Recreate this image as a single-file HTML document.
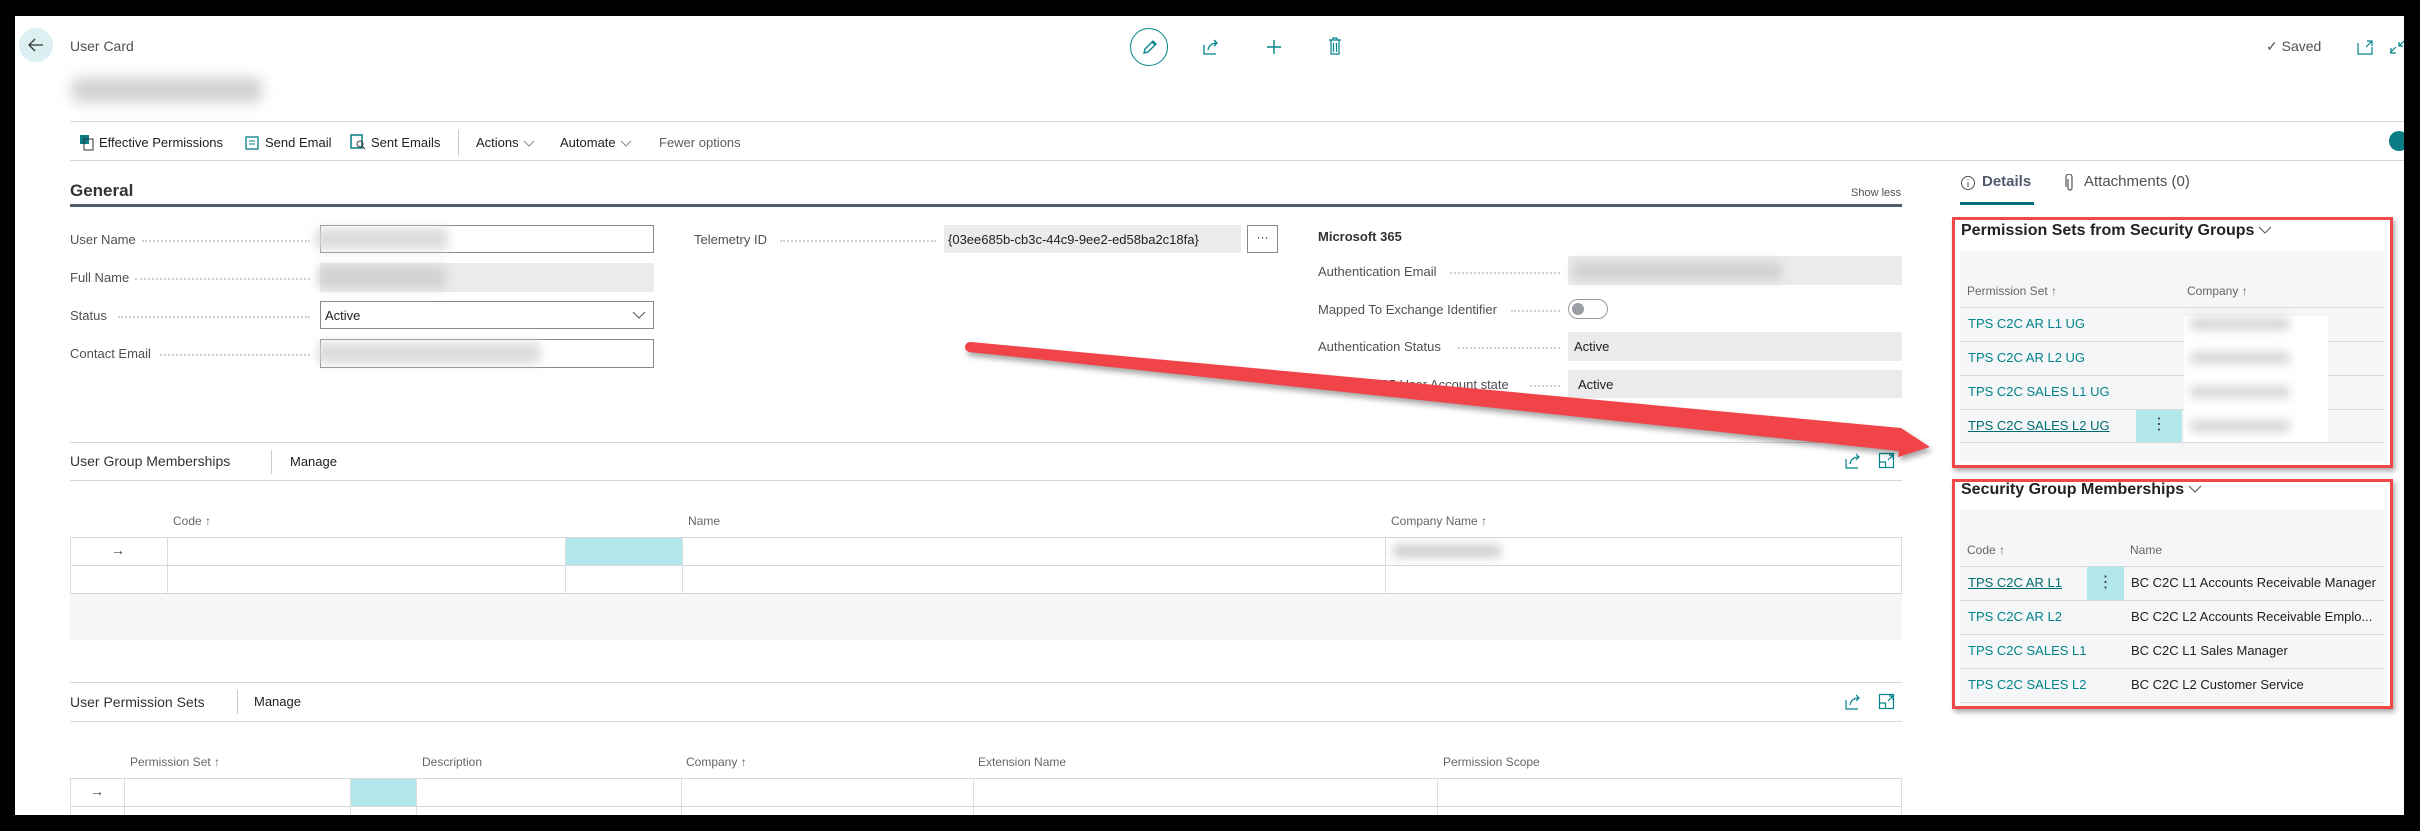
<!DOCTYPE html>
<html><head><meta charset="utf-8"><style>
*{margin:0;padding:0;box-sizing:border-box}
body{width:2420px;height:831px;background:#000;position:relative;overflow:hidden;font-family:"Liberation Sans",sans-serif;color:#212121}
.a{position:absolute;white-space:nowrap}
#page{position:absolute;left:15px;top:16px;width:2389px;height:799px;background:#fff;overflow:hidden}
.lbl{position:absolute;font-size:13px;color:#505050;line-height:16px}
.dot{position:absolute;border-bottom:2px dotted #d0d0d0;height:2px}
.hl{position:absolute;height:1px;background:#d8d8d8}
.vl{position:absolute;width:1px;background:#dcdcdc}
.grey{position:absolute;background:#eaebec}
.blur{position:absolute;background:#d4d5d7;filter:blur(5px);border-radius:4px}
.th{position:absolute;font-size:12px;color:#666}
.lnk{position:absolute;font-size:13px;color:#00838a}
.red{position:absolute;border:3px solid #f04848;box-shadow:2px 3px 5px rgba(0,0,0,.35)}
.chev{display:inline-block;vertical-align:middle;margin-left:4px}
</style></head><body>
<div id="page"></div>
<!-- header -->
<div class="a" style="left:19px;top:28px;width:34px;height:34px;border-radius:50%;background:#dcf0f2"></div>
<svg class="a" style="left:26px;top:36px" width="20" height="18"><path d="M17 9H3M9 3L3 9l6 6" stroke="#333" stroke-width="1.3" fill="none"/></svg>
<div class="a" style="left:70px;top:38px;font-size:14px;color:#505050">User Card</div>
<div class="blur" style="left:72px;top:78px;width:190px;height:24px;background:#cfd0d2;filter:blur(7px)"></div>

<div class="a" style="left:1130px;top:28px;width:38px;height:38px;border-radius:50%;border:1.5px solid #00838a"></div>
<svg class="a" style="left:1140px;top:37px" width="20" height="20"><path d="M4 16l1-4L13 4l3 3-8 8zM12 5l3 3" stroke="#00838a" stroke-width="1.3" fill="none"/></svg>
<svg class="a" style="left:1201px;top:37px" width="20" height="20"><path d="M3 8v9h12M7 13c1-5 4-7 9-7M13 3l3 3-3 3" stroke="#00838a" stroke-width="1.3" fill="none"/></svg>
<svg class="a" style="left:1264px;top:37px" width="20" height="20"><path d="M10 3v14M3 10h14" stroke="#00838a" stroke-width="1.4"/></svg>
<svg class="a" style="left:1325px;top:35px" width="20" height="22"><path d="M4 5h12M8 5V3h4v2M6 5v14h8V5M8.5 8v9M11.5 8v9" stroke="#00838a" stroke-width="1.2" fill="none"/></svg>

<div class="a" style="left:2266px;top:38px;font-size:14px;color:#505050">✓ Saved</div>
<svg class="a" style="left:2356px;top:38px" width="20" height="18"><path d="M2 5v11h14V9M11 3h5v5M16 3l-6 6" stroke="#00838a" stroke-width="1.2" fill="none"/></svg>
<svg class="a" style="left:2389px;top:38px" width="16" height="18"><path d="M1 15l6-6M2 10v5h5M15 3l-5 5M10 4v4h4" stroke="#00838a" stroke-width="1.2" fill="none"/></svg>

<div class="hl" style="left:70px;top:121px;width:2334px;background:#d6d6d6"></div>
<!-- toolbar -->
<svg class="a" style="left:79px;top:134px" width="16" height="18"><rect x="1" y="1" width="9" height="9" fill="#0a7c84"/><rect x="5" y="5" width="9" height="11" fill="none" stroke="#333" stroke-width="1"/></svg>
<div class="a" style="left:99px;top:135px;font-size:13px">Effective Permissions</div>
<svg class="a" style="left:245px;top:136px" width="14" height="14"><rect x="1" y="1" width="12" height="12" fill="none" stroke="#0a7c84" stroke-width="1.3"/><path d="M4 5h6M4 8h6" stroke="#0a7c84"/></svg>
<div class="a" style="left:265px;top:135px;font-size:13px">Send Email</div>
<svg class="a" style="left:350px;top:134px" width="16" height="17"><rect x="1" y="1" width="11" height="13" fill="none" stroke="#0a7c84" stroke-width="1.5"/><circle cx="10" cy="10" r="3" fill="none" stroke="#333"/><path d="M12 12l3 3" stroke="#333"/></svg>
<div class="a" style="left:371px;top:135px;font-size:13px">Sent Emails</div>
<div class="vl" style="left:458px;top:130px;height:26px;background:#ccc"></div>
<div class="a" style="left:476px;top:135px;font-size:13px">Actions<svg class="chev" width="12" height="8"><path d="M1 1l5 5 5-5" stroke="#888" fill="none"/></svg></div>
<div class="a" style="left:560px;top:135px;font-size:13px">Automate<svg class="chev" width="12" height="8"><path d="M1 1l5 5 5-5" stroke="#888" fill="none"/></svg></div>
<div class="a" style="left:659px;top:135px;font-size:13px;color:#606060">Fewer options</div>
<div class="a" style="left:2389px;top:131px;width:20px;height:20px;border-radius:50%;background:#0a7c84"></div>
<div class="hl" style="left:70px;top:160px;width:2334px;background:#d6d6d6"></div>

<!-- General -->
<div class="a" style="left:70px;top:181px;font-size:17px;font-weight:bold;color:#333">General</div>
<div class="a" style="left:1851px;top:187px;font-size:11px;color:#505050">Show less</div>
<div class="a" style="left:70px;top:204px;width:1832px;height:3px;background:#505c6d"></div>

<div class="lbl" style="left:70px;top:232px">User Name</div><div class="dot" style="left:142px;top:240px;width:168px"></div>
<div class="a" style="left:320px;top:225px;width:334px;height:28px;border:1px solid #8a8a8a"></div>
<div class="blur" style="left:316px;top:228px;width:132px;height:22px;background:#dcdcdc"></div>
<div class="lbl" style="left:70px;top:270px">Full Name</div><div class="dot" style="left:135px;top:278px;width:175px"></div>
<div class="grey" style="left:320px;top:263px;width:334px;height:29px"></div>
<div class="blur" style="left:318px;top:266px;width:128px;height:22px;background:#d2d2d4"></div>
<div class="lbl" style="left:70px;top:308px">Status</div><div class="dot" style="left:118px;top:316px;width:192px"></div>
<div class="a" style="left:320px;top:301px;width:334px;height:28px;border:1px solid #8a8a8a;font-size:13px;padding:6px 4px">Active</div>
<svg class="a" style="left:632px;top:310px" width="14" height="10"><path d="M1 2l6 6 6-6" stroke="#555" fill="none"/></svg>
<div class="lbl" style="left:70px;top:346px">Contact Email</div><div class="dot" style="left:160px;top:354px;width:150px"></div>
<div class="a" style="left:320px;top:339px;width:334px;height:29px;border:1px solid #8a8a8a"></div>
<div class="blur" style="left:318px;top:342px;width:222px;height:22px;background:#dcdcdc"></div>

<div class="lbl" style="left:694px;top:232px">Telemetry ID</div><div class="dot" style="left:780px;top:240px;width:156px"></div>
<div class="grey" style="left:944px;top:225px;width:297px;height:28px;font-size:13px;padding:7px 4px">{03ee685b-cb3c-44c9-9ee2-ed58ba2c18fa}</div>
<div class="a" style="left:1247px;top:225px;width:31px;height:28px;border:1px solid #8a8a8a;font-size:12px;text-align:center;line-height:22px">···</div>

<div class="a" style="left:1318px;top:229px;font-size:13px;font-weight:bold;color:#333">Microsoft 365</div>
<div class="lbl" style="left:1318px;top:264px">Authentication Email</div><div class="dot" style="left:1450px;top:272px;width:110px"></div>
<div class="grey" style="left:1568px;top:256px;width:334px;height:29px"></div>
<div class="blur" style="left:1572px;top:262px;width:210px;height:18px;background:#d2d2d4"></div>
<div class="lbl" style="left:1318px;top:302px">Mapped To Exchange Identifier</div><div class="dot" style="left:1511px;top:310px;width:49px"></div>
<div class="a" style="left:1568px;top:299px;width:40px;height:20px;border:1px solid #999;border-radius:10px"></div>
<div class="a" style="left:1572px;top:303px;width:12px;height:12px;border-radius:50%;background:#9a9da3"></div>
<div class="lbl" style="left:1318px;top:339px">Authentication Status</div><div class="dot" style="left:1458px;top:347px;width:102px"></div>
<div class="grey" style="left:1568px;top:332px;width:334px;height:29px;font-size:13px;padding:7px 6px">Active</div>
<div class="lbl" style="left:1318px;top:377px">Microsoft 365 User Account state</div><div class="dot" style="left:1530px;top:385px;width:30px"></div>
<div class="grey" style="left:1568px;top:370px;width:334px;height:28px;font-size:13px;padding:7px 10px">Active</div>

<!-- User Group Memberships -->
<div class="hl" style="left:70px;top:442px;width:1832px"></div>
<div class="a" style="left:70px;top:453px;font-size:14px;color:#333">User Group Memberships</div>
<div class="vl" style="left:271px;top:450px;height:24px;background:#ccc"></div>
<div class="a" style="left:290px;top:454px;font-size:13px">Manage</div>
<svg class="a" style="left:1844px;top:452px" width="18" height="18"><path d="M2 7v9h12M6 12c1-5 4-7 9-7M12 2l3 3-3 3" stroke="#00838a" stroke-width="1.2" fill="none"/></svg>
<svg class="a" style="left:1878px;top:452px" width="18" height="18"><rect x="1.5" y="1.5" width="14" height="14" fill="none" stroke="#00838a" stroke-width="1.2"/><path d="M1.5 10h6v6M10 8l5-5M11 3h4v4" stroke="#00838a" stroke-width="1.2" fill="none"/></svg>
<div class="hl" style="left:70px;top:480px;width:1832px"></div>
<div class="th" style="left:173px;top:514px">Code ↑</div>
<div class="th" style="left:688px;top:514px">Name</div>
<div class="th" style="left:1391px;top:514px">Company Name ↑</div>
<div class="a" style="left:565px;top:537px;width:117px;height:28px;background:#b2e8eb"></div>
<div class="hl" style="left:70px;top:537px;width:1832px"></div>
<div class="hl" style="left:70px;top:565px;width:1832px"></div>
<div class="hl" style="left:70px;top:593px;width:1832px"></div>
<div class="vl" style="left:70px;top:537px;height:56px"></div>
<div class="vl" style="left:167px;top:537px;height:56px"></div>
<div class="vl" style="left:565px;top:537px;height:56px"></div>
<div class="vl" style="left:682px;top:537px;height:56px"></div>
<div class="vl" style="left:1385px;top:537px;height:56px"></div>
<div class="vl" style="left:1901px;top:537px;height:56px"></div>
<div class="a" style="left:111px;top:542px;font-size:14px;color:#444">→</div>
<div class="blur" style="left:1393px;top:544px;width:108px;height:14px;background:#d0d0d2"></div>
<div class="a" style="left:70px;top:594px;width:1832px;height:46px;background:#f5f6f7"></div>

<!-- User Permission Sets -->
<div class="hl" style="left:70px;top:682px;width:1832px"></div>
<div class="a" style="left:70px;top:694px;font-size:14px;color:#333">User Permission Sets</div>
<div class="vl" style="left:237px;top:690px;height:24px;background:#ccc"></div>
<div class="a" style="left:254px;top:694px;font-size:13px">Manage</div>
<svg class="a" style="left:1844px;top:693px" width="18" height="18"><path d="M2 7v9h12M6 12c1-5 4-7 9-7M12 2l3 3-3 3" stroke="#00838a" stroke-width="1.2" fill="none"/></svg>
<svg class="a" style="left:1878px;top:693px" width="18" height="18"><rect x="1.5" y="1.5" width="14" height="14" fill="none" stroke="#00838a" stroke-width="1.2"/><path d="M1.5 10h6v6M10 8l5-5M11 3h4v4" stroke="#00838a" stroke-width="1.2" fill="none"/></svg>
<div class="hl" style="left:70px;top:721px;width:1832px"></div>
<div class="th" style="left:130px;top:755px">Permission Set ↑</div>
<div class="th" style="left:422px;top:755px">Description</div>
<div class="th" style="left:686px;top:755px">Company ↑</div>
<div class="th" style="left:978px;top:755px">Extension Name</div>
<div class="th" style="left:1443px;top:755px">Permission Scope</div>
<div class="a" style="left:350px;top:778px;width:66px;height:28px;background:#b2e8eb"></div>
<div class="hl" style="left:70px;top:778px;width:1832px"></div>
<div class="hl" style="left:70px;top:806px;width:1832px"></div>
<div class="vl" style="left:70px;top:778px;height:40px"></div>
<div class="vl" style="left:124px;top:778px;height:40px"></div>
<div class="vl" style="left:350px;top:778px;height:40px"></div>
<div class="vl" style="left:416px;top:778px;height:40px"></div>
<div class="vl" style="left:681px;top:778px;height:40px"></div>
<div class="vl" style="left:973px;top:778px;height:40px"></div>
<div class="vl" style="left:1437px;top:778px;height:40px"></div>
<div class="vl" style="left:1901px;top:778px;height:40px"></div>
<div class="a" style="left:90px;top:783px;font-size:14px;color:#444">→</div>

<!-- right panel -->
<svg class="a" style="left:1960px;top:175px" width="16" height="16"><circle cx="8" cy="8" r="6.5" fill="none" stroke="#555"/><path d="M8 7v5M8 4.5v1" stroke="#555"/></svg>
<div class="a" style="left:1982px;top:173px;font-size:15px;font-weight:bold;color:#505c6d">Details</div>
<div class="a" style="left:1960px;top:202px;width:74px;height:3px;background:#00717a"></div>
<svg class="a" style="left:2064px;top:174px" width="12" height="18"><path d="M4 5v9a2 2 0 0 0 4 0V3a3 3 0 0 0-6 0v10" stroke="#555" stroke-width="1.2" fill="none"/></svg>
<div class="a" style="left:2084px;top:173px;font-size:15px;color:#505050">Attachments (0)</div>

<div class="a" style="left:1960px;top:251px;width:424px;height:210px;background:#f5f6f7"></div>
<div class="a" style="left:1961px;top:222px;font-size:16px;font-weight:bold;color:#222">Permission Sets from Security Groups<svg class="chev" width="14" height="9"><path d="M1 1l6 6 6-6" stroke="#555" fill="none"/></svg></div>
<div class="th" style="left:1967px;top:284px">Permission Set ↑</div>
<div class="th" style="left:2187px;top:284px">Company ↑</div>
<div class="hl" style="left:1960px;top:307px;width:424px"></div>
<div class="hl" style="left:1960px;top:341px;width:424px"></div>
<div class="hl" style="left:1960px;top:375px;width:424px"></div>
<div class="hl" style="left:1960px;top:409px;width:424px"></div>
<div class="hl" style="left:1960px;top:442px;width:424px"></div>
<div class="a" style="left:2184px;top:316px;width:144px;height:126px;background:#fff"></div>
<div class="blur" style="left:2190px;top:318px;width:100px;height:12px"></div>
<div class="blur" style="left:2190px;top:352px;width:100px;height:12px"></div>
<div class="blur" style="left:2190px;top:386px;width:100px;height:12px"></div>
<div class="blur" style="left:2190px;top:420px;width:100px;height:12px"></div>
<div class="lnk" style="left:1968px;top:316px">TPS C2C AR L1 UG</div>
<div class="lnk" style="left:1968px;top:350px">TPS C2C AR L2 UG</div>
<div class="lnk" style="left:1968px;top:384px">TPS C2C SALES L1 UG</div>
<div class="lnk" style="left:1968px;top:418px;text-decoration:underline;color:#006b72">TPS C2C SALES L2 UG</div>
<div class="a" style="left:2136px;top:410px;width:46px;height:32px;background:#b2e8eb;text-align:center;font-size:16px;line-height:30px;color:#333">⋮</div>
<div class="red" style="left:1952px;top:217px;width:441px;height:251px"></div>

<div class="a" style="left:1960px;top:510px;width:424px;height:196px;background:#f5f6f7"></div>
<div class="a" style="left:1961px;top:481px;font-size:16px;font-weight:bold;color:#222">Security Group Memberships<svg class="chev" width="14" height="9"><path d="M1 1l6 6 6-6" stroke="#555" fill="none"/></svg></div>
<div class="th" style="left:1967px;top:543px">Code ↑</div>
<div class="th" style="left:2130px;top:543px">Name</div>
<div class="hl" style="left:1960px;top:566px;width:424px"></div>
<div class="hl" style="left:1960px;top:600px;width:424px"></div>
<div class="hl" style="left:1960px;top:634px;width:424px"></div>
<div class="hl" style="left:1960px;top:668px;width:424px"></div>
<div class="hl" style="left:1960px;top:702px;width:424px"></div>
<div class="a" style="left:2087px;top:567px;width:37px;height:33px;background:#b2e8eb;text-align:center;font-size:16px;line-height:31px;color:#333">⋮</div>
<div class="lnk" style="left:1968px;top:575px;text-decoration:underline;color:#006b72">TPS C2C AR L1</div>
<div class="lnk" style="left:1968px;top:609px">TPS C2C AR L2</div>
<div class="lnk" style="left:1968px;top:643px">TPS C2C SALES L1</div>
<div class="lnk" style="left:1968px;top:677px">TPS C2C SALES L2</div>
<div class="a" style="left:2131px;top:575px;font-size:13px">BC C2C L1 Accounts Receivable Manager</div>
<div class="a" style="left:2131px;top:609px;font-size:13px">BC C2C L2 Accounts Receivable Emplo...</div>
<div class="a" style="left:2131px;top:643px;font-size:13px">BC C2C L1 Sales Manager</div>
<div class="a" style="left:2131px;top:677px;font-size:13px">BC C2C L2 Customer Service</div>
<div class="red" style="left:1952px;top:479px;width:441px;height:230px"></div>

<!-- arrow -->
<svg class="a" style="left:0;top:0;filter:drop-shadow(2px 4px 3px rgba(0,0,0,.35))" width="2420" height="831">
<polygon points="971,342 1901,428 1930,447 1898,457 1899,451 969,352" fill="#f04448"/>
<circle cx="970" cy="347" r="5" fill="#f04448"/>
</svg>
<!-- black frame edges -->
<div class="a" style="left:0;top:0;width:2420px;height:16px;background:#000"></div>
<div class="a" style="left:0;top:815px;width:2420px;height:16px;background:#000"></div>
<div class="a" style="left:2404px;top:0;width:16px;height:831px;background:#000"></div>
<div class="a" style="left:0;top:0;width:15px;height:831px;background:#000"></div>
</body></html>
